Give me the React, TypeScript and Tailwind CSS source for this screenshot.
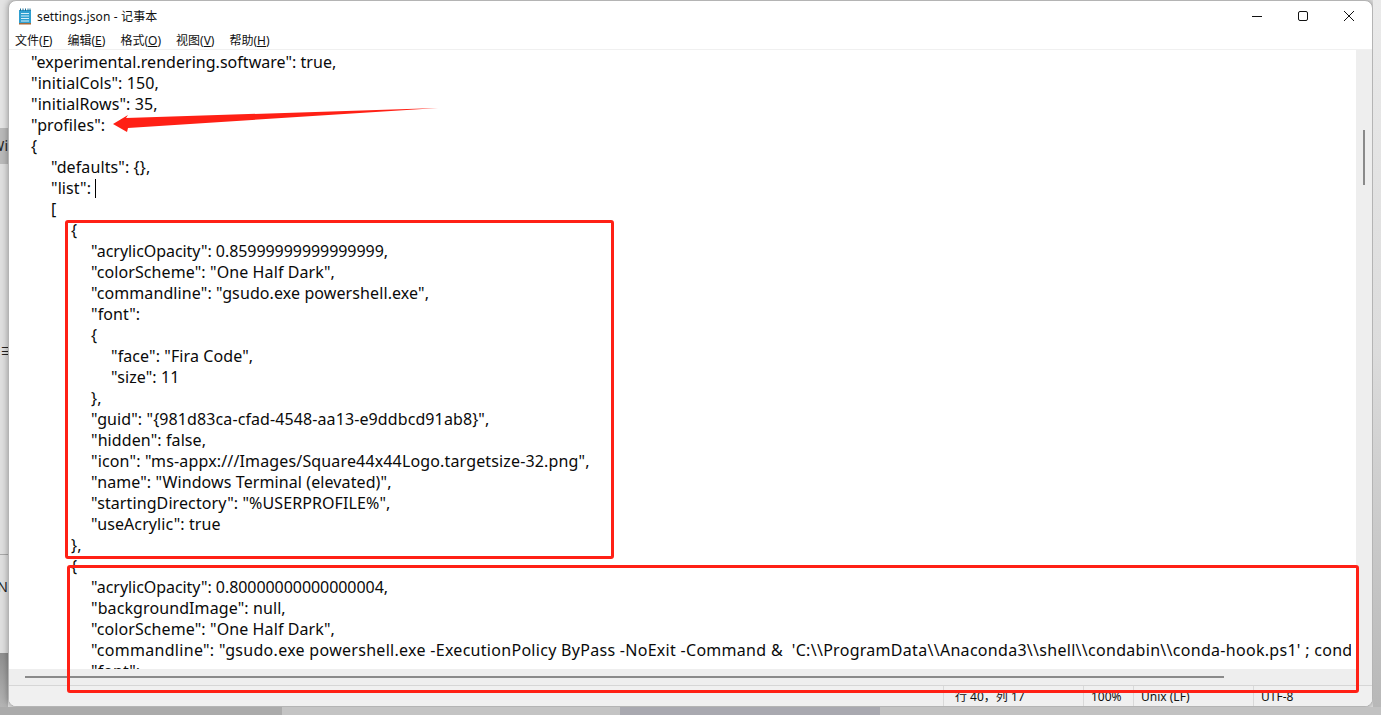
import React from 'react';

const uiFont = "font-['Noto_Sans','Noto_Sans_CJK_SC',sans-serif]";

const indents: Record<number, string> = {
  0: 'pl-[22px]',
  1: 'pl-[42px]',
  2: 'pl-[62px]',
  3: 'pl-[82px]',
  4: 'pl-[102px]',
};

// digits and backslashes run at other widths than in the reference font
const lineTracking: Record<number, string> = {
  0: 'tracking-[0.03px]',
  9: 'tracking-[-0.06px]',
  19: 'tracking-[0.15px]',
  25: 'tracking-[-0.06px]',
  28: 'tracking-[0.29px]',
};

const lines: [number, string][] = [
  [0, '"experimental.rendering.software": true,'],
  [0, '"initialCols": 150,'],
  [0, '"initialRows": 35,'],
  [0, '"profiles":'],
  [0, '{'],
  [1, '"defaults": {},'],
  [1, '"list": '],
  [1, '['],
  [2, '{'],
  [3, '"acrylicOpacity": 0.85999999999999999,'],
  [3, '"colorScheme": "One Half Dark",'],
  [3, '"commandline": "gsudo.exe powershell.exe",'],
  [3, '"font":'],
  [3, '{'],
  [4, '"face": "Fira Code",'],
  [4, '"size": 11'],
  [3, '},'],
  [3, '"guid": "{981d83ca-cfad-4548-aa13-e9ddbcd91ab8}",'],
  [3, '"hidden": false,'],
  [3, '"icon": "ms-appx:///Images/Square44x44Logo.targetsize-32.png",'],
  [3, '"name": "Windows Terminal (elevated)",'],
  [3, '"startingDirectory": "%USERPROFILE%",'],
  [3, '"useAcrylic": true'],
  [2, '},'],
  [2, '{'],
  [3, '"acrylicOpacity": 0.80000000000000004,'],
  [3, '"backgroundImage": null,'],
  [3, '"colorScheme": "One Half Dark",'],
  [3, `"commandline": "gsudo.exe powershell.exe -ExecutionPolicy ByPass -NoExit -Command &  'C:\\\\ProgramData\\\\Anaconda3\\\\shell\\\\condabin\\\\conda-hook.ps1' ; conda activate base"`],
  [3, '"font":'],
];

const menu: [string, string][] = [
  ['文件', 'F'],
  ['编辑', 'E'],
  ['格式', 'O'],
  ['视图', 'V'],
  ['帮助', 'H'],
];

const NotepadIcon = () => (
  <svg width="14" height="17" viewBox="0 0 14 17" className="shrink-0">
    <rect x="1" y="2" width="12" height="14" fill="#2f9fd0" />
    <rect x="1" y="15" width="12" height="1.5" fill="#a5693a" />
    <path d="M2.5 0.5v2.5M5 0.5v2.5M7.5 0.5v2.5M10 0.5v2.5M12 0.5v2.5" stroke="#1d6f96" strokeWidth="1" />
    <path d="M3 5.5h8M3 8h8M3 10.5h8M3 13h8" stroke="#d8f0fa" strokeWidth="1" />
  </svg>
);

const WindowButtons = () => (
  <div className="flex items-center">
    <svg width="46" height="32" viewBox="0 0 46 32">
      <path d="M0 15.5h10" transform="translate(18 0)" stroke="#111" strokeWidth="1" />
    </svg>
    <svg width="46" height="32" viewBox="0 0 46 32">
      <rect x="18.5" y="10.5" width="9" height="9" rx="1.5" fill="none" stroke="#111" strokeWidth="1" />
    </svg>
    <svg width="46" height="32" viewBox="0 0 46 32">
      <path d="M18 10l10 10M28 10l-10 10" stroke="#111" strokeWidth="1" />
    </svg>
  </div>
);

export default function App() {
  return (
    <div className={`relative w-[1381px] h-[715px] overflow-hidden bg-[#e2e2e2] ${uiFont}`}>
      <div className="flex h-[707px]">
        {/* desktop behind, left edge */}
        <div className="w-2 shrink-0 flex flex-col text-[14px] text-[#222] overflow-hidden">
          <div className="h-[128px] bg-[#e3e3e3]" />
          <div className="h-[36px] bg-[#b9b9b9] flex items-center justify-end leading-none">Wi</div>
          <div className="h-[180px] bg-[#dedede]" />
          <div className="h-[16px] bg-[#dedede] leading-none">≡</div>
          <div className="h-[195px] bg-[#dedede] border-b border-[#a8a8a8]" />
          <div className="h-[98px] bg-[#dedede] flex items-center justify-end leading-none pb-[34px]">N</div>
          <div className="flex-1 bg-gradient-to-b from-[#8e8e8e] to-[#b4b4b4]" />
        </div>

        {/* notepad window */}
        <div className="w-[1365px] shrink-0 flex flex-col bg-white border border-[#b4b4b4] rounded-lg overflow-hidden shadow-[0_0_6px_rgba(0,0,0,0.35)]">
          <div className="h-[31px] shrink-0 flex items-center justify-between">
            <div className="flex items-center gap-[5px] pl-[9px] text-[12px] tracking-[0.15px] text-[#111]">
              <NotepadIcon />
              <span>settings.json - 记事本</span>
            </div>
            <WindowButtons />
          </div>
          <div className="h-[18px] shrink-0 flex items-center gap-[15px] pl-[6px] text-[12px] text-[#111] border-b border-[#f0f0f0]">
            {menu.map(([name, key]) => (
              <span key={key} className="whitespace-nowrap">
                {name}(<span className="underline">{key}</span>)
              </span>
            ))}
          </div>
          <div className="flex-1 min-h-0 flex">
            <div className="flex-1 min-w-0 flex flex-col">
              <div className="flex-1 min-h-0 overflow-hidden pt-[2px] mr-[5px] text-[16px] tracking-[0.1px] leading-[21px] text-[#0a0a0a]">
                {lines.map(([indent, text], i) => (
                  <div key={i} className={`${indents[indent]} ${lineTracking[i] ?? ''} h-[21px] whitespace-pre flex items-center`}>
                    {text}
                    {i === 6 && <span className="w-px h-[19px] bg-black" />}
                  </div>
                ))}
              </div>
              <div className="h-4 shrink-0 bg-[#eeeeee] flex items-center pl-[16px]">
                <div className="w-[1199px] h-[2px] bg-[#8a8a8a]" />
              </div>
            </div>
            <div className="w-4 shrink-0 bg-[#eeeeee] pt-[80px] pl-[7px]">
              <div className="w-[2px] h-[55px] bg-[#8a8a8a]" />
            </div>
          </div>
          <div className="h-[21px] shrink-0 bg-[#f0f0f0] border-t border-[#d6d6d6] flex justify-end text-[12px] text-[#111]">
            <div className="w-[140px] border-l border-[#d9d9d9] pl-[11px] pt-[1px] leading-[19px]">行 40，列 17</div>
            <div className="w-[50px] border-l border-[#d9d9d9] pl-[7px] pt-[1px] leading-[19px]">100%</div>
            <div className="w-[120px] border-l border-[#d9d9d9] pl-[7px] pt-[1px] leading-[19px]">Unix (LF)</div>
            <div className="w-[119px] border-l border-[#d9d9d9] pl-[7px] pt-[1px] leading-[19px]">UTF-8</div>
          </div>
        </div>

        <div className="flex-1 bg-gradient-to-b from-[#eaeaea] via-[#dcdcdc] to-[#b8b8b8]" />
      </div>

      {/* desktop behind, bottom edge */}
      <div className="h-2 flex">
        <div className="w-[282px] bg-[#ababab]" />
        <div className="w-[338px] bg-[#c4c4c4]" />
        <div className="w-[260px] bg-[#a9a9b0]" />
        <div className="flex-1 bg-[#c2c2c2]" />
      </div>

      {/* red annotations drawn over the screenshot */}
      <div className="absolute left-[65px] top-[220px] w-[549px] h-[339px] border-[3px] border-[#ff2015] rounded-[3px]" />
      <div className="absolute left-[67px] top-[565px] w-[1292px] h-[128px] border-[3px] border-[#ff2015] rounded-[3px]" />
      <svg className="absolute left-[110px] top-[104px]" width="332" height="30" viewBox="0 0 332 30">
        <path d="M3 20L18 11L16 14L328 4L18 24L17 28Z" fill="#ff2015" />
      </svg>
    </div>
  );
}
